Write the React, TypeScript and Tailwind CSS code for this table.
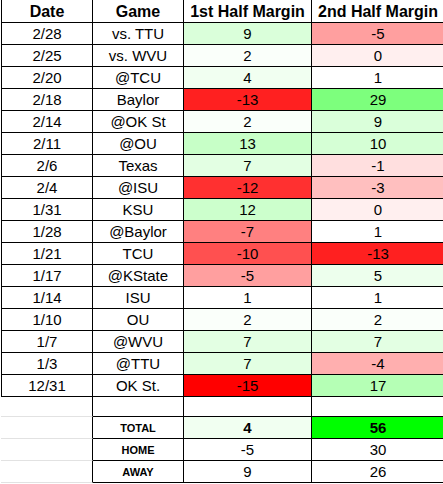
import React from "react";

type Row = [string, string, number, number];

const rows: Row[] = [
  ["2/28", "vs. TTU", 9, -5],
  ["2/25", "vs. WVU", 2, 0],
  ["2/20", "@TCU", 4, 1],
  ["2/18", "Baylor", -13, 29],
  ["2/14", "@OK St", 2, 9],
  ["2/11", "@OU", 13, 10],
  ["2/6", "Texas", 7, -1],
  ["2/4", "@ISU", -12, -3],
  ["1/31", "KSU", 12, 0],
  ["1/28", "@Baylor", -7, 1],
  ["1/21", "TCU", -10, -13],
  ["1/17", "@KState", -5, 5],
  ["1/14", "ISU", 1, 1],
  ["1/10", "OU", 2, 2],
  ["1/7", "@WVU", 7, 7],
  ["1/3", "@TTU", 7, -4],
  ["12/31", "OK St.", -15, 17],
];

const bg: Record<number, string> = {
  [-15]: "bg-[#ff0000]",
  [-13]: "bg-[#ff2020]",
  [-12]: "bg-[#ff3030]",
  [-10]: "bg-[#ff5050]",
  [-7]: "bg-[#ff8080]",
  [-5]: "bg-[#ff9f9f]",
  [-4]: "bg-[#ffafaf]",
  [-3]: "bg-[#ffbfbf]",
  [-1]: "bg-[#ffdfdf]",
  0: "bg-[#ffefef]",
  1: "bg-white",
  2: "bg-[#fafffa]",
  4: "bg-[#f1fff1]",
  5: "bg-[#edffed]",
  7: "bg-[#e3ffe3]",
  9: "bg-[#daffda]",
  10: "bg-[#d5ffd5]",
  12: "bg-[#ccffcc]",
  13: "bg-[#c7ffc7]",
  17: "bg-[#b5ffb5]",
  29: "bg-[#7dff7d]",
  56: "bg-[#00ff00]",
};

const cell = "flex items-center justify-center border-black border-r border-b pt-[2px]";

export default function App() {
  return (
    <div
      className="w-[443px] h-[484px] overflow-hidden bg-white text-black"
      style={{ fontFamily: '"Liberation Sans", Arial, sans-serif' }}
    >
      <div className="ml-[1px] w-[444px] flex flex-col">
        <div className="flex h-[23px] font-bold text-[16px]">
          <div className={`${cell} w-[92px] border-l`}>Date</div>
          <div className={`${cell} w-[91px]`}>Game</div>
          <div className={`${cell} w-[128px] whitespace-nowrap`}>1st Half Margin</div>
          <div className={`${cell} w-[133px] whitespace-nowrap`}>2nd Half Margin</div>
        </div>
        {rows.map(([d, g, a, b]) => (
          <div key={d} className="flex h-[22px] text-[15px]">
            <div className={`${cell} w-[92px] border-l`}>{d}</div>
            <div className={`${cell} w-[91px]`}>{g}</div>
            <div className={`${cell} w-[128px] ${bg[a]}`}>{a}</div>
            <div className={`${cell} w-[133px] ${bg[b]}`}>{b}</div>
          </div>
        ))}
        <div className="flex h-[20px]">
          <div className="w-[92px] border-r border-b border-r-black border-b-[#e2e2e2]"></div>
          <div className={`${cell} w-[91px]`}></div>
          <div className={`${cell} w-[128px]`}></div>
          <div className={`${cell} w-[133px]`}></div>
        </div>
        {[
          ["TOTAL", 4, 56, true],
          ["HOME", -5, 30, false],
          ["AWAY", 9, 26, false],
        ].map(([label, a, b, tot]) => (
          <div key={label as string} className="flex h-[22px] text-[15px]">
            <div className="w-[92px] border-r border-b border-r-black border-b-[#e2e2e2]"></div>
            <div className={`${cell} w-[91px] font-bold text-[11px]`}>{label as string}</div>
            <div className={`${cell} w-[128px] ${tot ? "font-bold " + bg[a as number] : ""}`}>{a as number}</div>
            <div className={`${cell} w-[133px] ${tot ? "font-bold " + bg[b as number] : ""}`}>{b as number}</div>
          </div>
        ))}
      </div>
    </div>
  );
}
